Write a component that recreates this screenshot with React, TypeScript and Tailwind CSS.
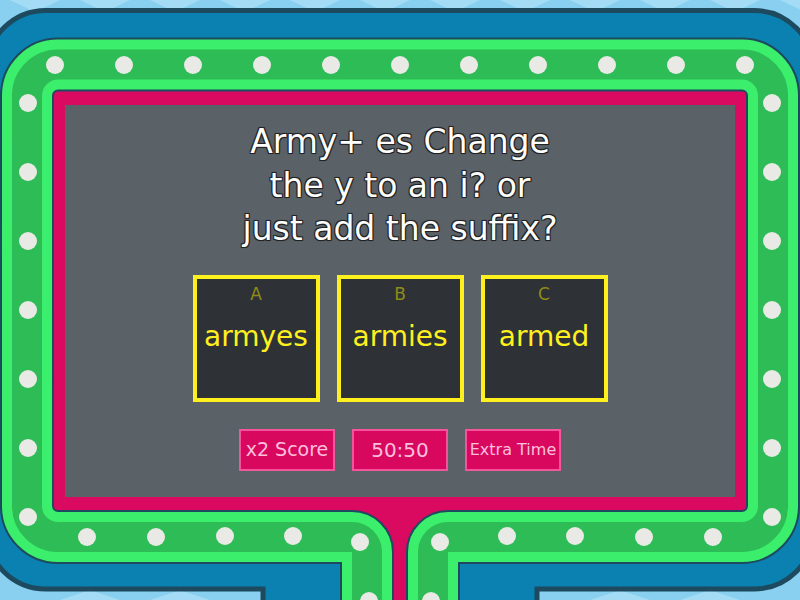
import React from 'react';

const answers = [
  { letter: 'A', text: 'armyes' },
  { letter: 'B', text: 'armies' },
  { letter: 'C', text: 'armed' },
];

const powerUps = [
  { label: 'x2 Score', size: 'text-[19px]' },
  { label: '50:50', size: 'text-[20px]' },
  { label: 'Extra Time', size: 'text-[16px]' },
];

// green band centre line: runs from the left leg, round the screen, down the right leg
const band =
  'M 367 620 V 552 A 15 15 0 0 0 352 537 H 58 A 31 31 0 0 1 27 506 V 95.5 A 31 31 0 0 1 58 64.5 H 742 A 31 31 0 0 1 773 95.5 V 506 A 31 31 0 0 1 742 537 H 448 A 15 15 0 0 0 433 552 V 620';

const stage =
  'M 46 10.5 H 754 A 60 60 0 0 1 814 70.5 V 529 A 60 60 0 0 1 754 589 H 537 V 620 H 263 V 589 H 46 A 60 60 0 0 1 -14 529 V 70.5 A 60 60 0 0 1 46 10.5 Z';

const sideYs = [103, 172, 241, 310, 379, 448, 517];
const dots: [number, number][] = [
  ...Array.from({ length: 11 }, (_, i) => [55 + i * 69, 65] as [number, number]),
  ...sideYs.map((y) => [28, y] as [number, number]),
  ...sideYs.map((y) => [772, y] as [number, number]),
  [87, 537], [156, 537], [225, 536], [293, 536], [360, 542], [369, 601],
  [440, 542], [507, 536], [575, 536], [644, 537], [713, 537], [431, 601],
];

function Frame() {
  return (
    <svg viewBox="0 0 800 600" className="absolute inset-0 w-[800px] h-[600px]">
      {/* faint backdrop pattern */}
      {Array.from({ length: 12 }).map((_, i) => (
        <path key={i} d={`M ${i * 70 + 10} 0 L ${i * 70 + 35} 12 L ${i * 70 + 60} 0 Z`} fill="#a3dcf4" />
      ))}
      <path d="M 60 600 L 90 590 L 120 600 Z M 150 600 L 180 590 L 210 600 Z M 590 600 L 620 590 L 650 600 Z M 680 600 L 710 590 L 740 600 Z" fill="#a3dcf4" />
      {/* blue stage */}
      <path d={stage} fill="#0a81b0" stroke="#1d4a5e" strokeWidth="5" />
      {/* pink bezel */}
      <path d={`${band} Z`} fill="#da0a61" />
      {/* green light band */}
      <path d={band} fill="none" stroke="#1d4a5e" strokeWidth="54" />
      <path d={band} fill="none" stroke="#3bee6b" strokeWidth="50" />
      <path d={band} fill="none" stroke="#2dbc55" strokeWidth="30" />
      {dots.map(([x, y], i) => (
        <circle key={i} cx={x} cy={y} r="9" fill="#e9e9e6" />
      ))}
    </svg>
  );
}

export default function App() {
  return (
    <div className="relative w-[800px] h-[600px] overflow-hidden bg-[#89d0f0] pl-[65px] pt-[105px] font-['Comic_Sans_MS','DejaVu_Sans',sans-serif]">
      <Frame />
      <div className="relative w-[670px] h-[392px] bg-[#5a6167] flex flex-col items-center pt-[15px]">
        <h1 className="text-white text-center text-[33px] leading-[43.5px] [text-shadow:-1px_-1px_0_#222,1px_-1px_0_#222,-1px_1px_0_#222,1px_1px_0_#222,0_0_2px_#222]">
          Army+ es Change
          <br />
          the y to an i? or
          <br />
          just add the suffix?
        </h1>

        <div className="mt-[24px] flex gap-[17px]">
          {answers.map((a) => (
            <div
              key={a.letter}
              className="w-[127px] h-[127px] border-4 border-[#fff01e] bg-[#2e3237] flex flex-col items-center"
            >
              <span className="mt-[4px] text-[17px] leading-[22px] text-[#8e8c17]">{a.letter}</span>
              <span className="mt-[14px] text-[28px] leading-[36px] text-[#fff01e]">{a.text}</span>
            </div>
          ))}
        </div>

        <div className="mt-[27px] flex gap-[17px]">
          {powerUps.map((p) => (
            <div
              key={p.label}
              className={`w-[96px] h-[42px] border-2 border-[#f2559c] bg-[#d9085f] flex items-center justify-center whitespace-nowrap text-[#ffbfdc] ${p.size}`}
            >
              {p.label}
            </div>
          ))}
        </div>
      </div>
    </div>
  );
}
